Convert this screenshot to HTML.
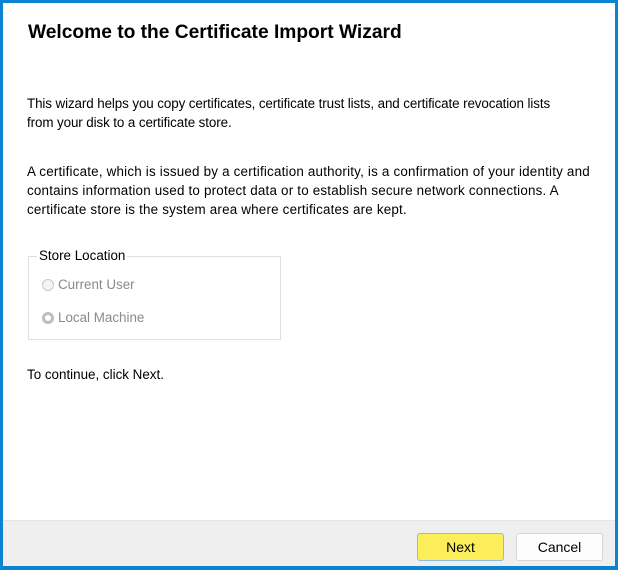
<!DOCTYPE html>
<html><head><style>
*{margin:0;padding:0;box-sizing:border-box}
body{width:618px;height:570px;background:#0a84d0;font-family:"Liberation Sans",sans-serif;color:#000;position:relative;overflow:hidden}
.win{position:absolute;left:3px;top:3px;width:612px;height:563px;background:#fff}
.t{position:absolute;font-size:13.4px;white-space:nowrap;line-height:19px}
h1{position:absolute;left:25px;top:19px;font-size:19.2px;font-weight:bold;white-space:nowrap}
.foot{position:absolute;left:0;top:517px;width:612px;height:46px;background:#efefef;border-top:1px solid #e4e4e4}
.btn{position:absolute;top:12px;width:87px;height:28px;font-size:14px;text-align:center;line-height:26px;border-radius:3px}
.grp{position:absolute;left:25px;top:253px;width:253px;height:84px;border:1px solid #e0e0e0}
.leg{position:absolute;left:8px;top:-9px;background:#fff;padding:0 2px;font-size:13.4px}
.r{position:absolute;left:13px;font-size:13.4px;color:#8a8a8a}
.rad{display:inline-block;width:12px;height:12px;border:1px solid #c8c8c8;border-radius:50%;vertical-align:-2px;margin-right:4px;background:#f4f4f4}
</style></head><body>
<div class="win">
<h1>Welcome to the Certificate Import Wizard</h1>
<div class="t" style="left:24px;top:91px;letter-spacing:-0.1px">This wizard helps you copy certificates, certificate trust lists, and certificate revocation lists<br>from your disk to a certificate store.</div>
<div class="t" style="left:24px;top:159px;letter-spacing:0.2px">A certificate, which is issued by a certification authority, is a confirmation of your identity and<br>contains information used to protect data or to establish secure network connections. A<br>certificate store is the system area where certificates are kept.</div>
<div class="grp"><span class="leg">Store Location</span>
<div class="r" style="top:20px"><span class="rad"></span>Current User</div>
<div class="r" style="top:53px"><span class="rad" style="background:#fff;border:3px solid #bdbdbd"></span>Local Machine</div>
</div>
<div class="t" style="left:24px;top:362px">To continue, click Next.</div>
<div class="foot">
<div class="btn" style="left:414px;background:#fbee5a;border:1px solid #8cbbe6">Next</div>
<div class="btn" style="left:513px;background:#fdfdfd;border:1px solid #d6d6d6">Cancel</div>
</div>
</div>
</body></html>
